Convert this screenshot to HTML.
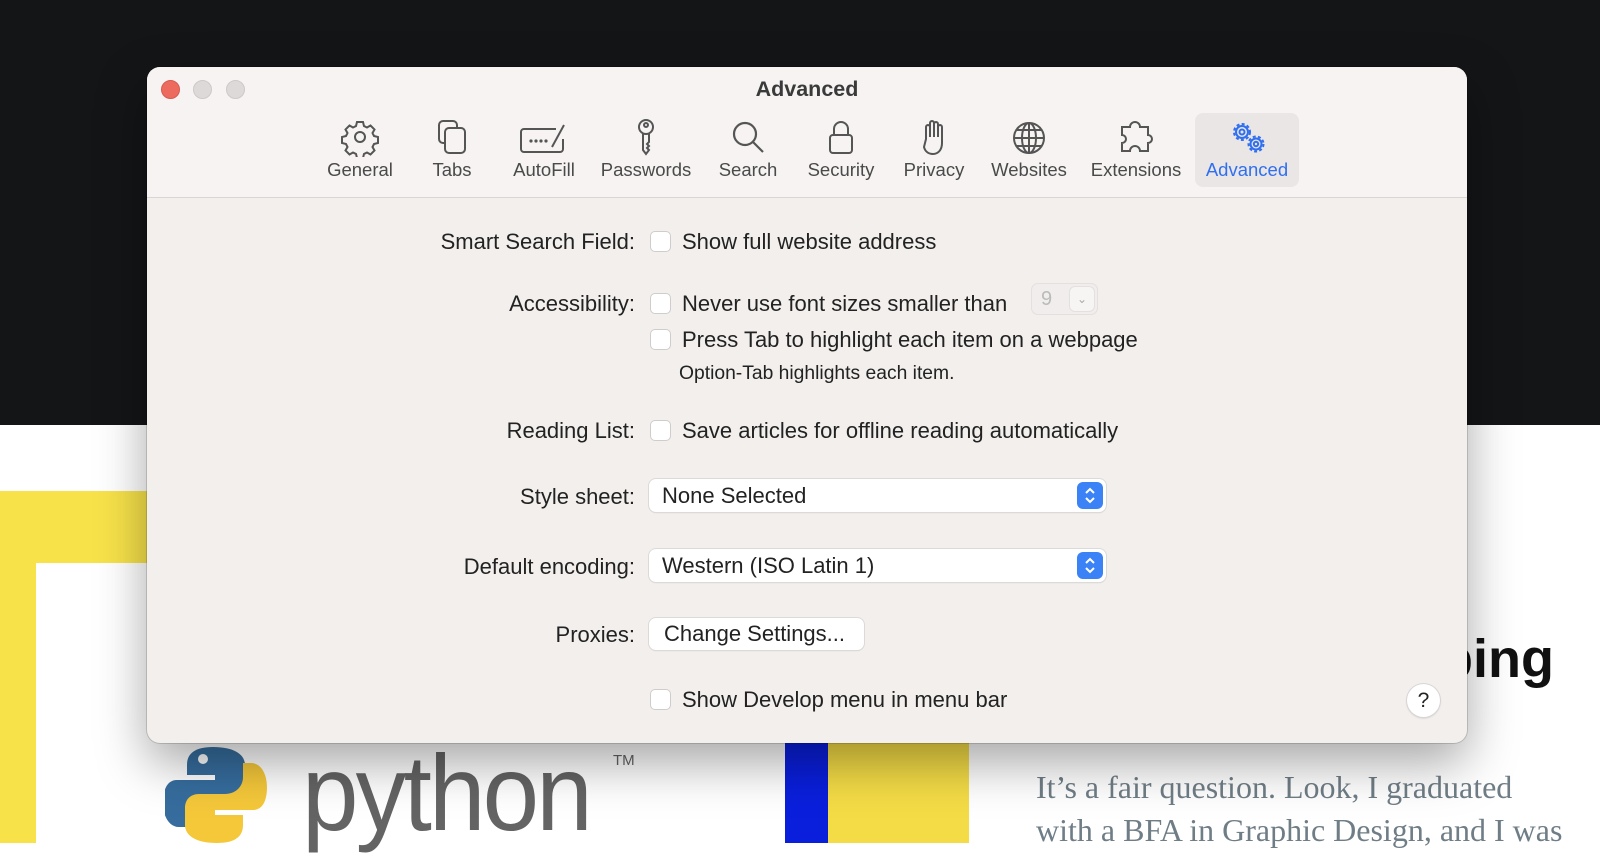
<!DOCTYPE html>
<html><head><meta charset="utf-8"><style>
*{margin:0;padding:0;box-sizing:border-box}
body{width:1600px;height:843px;overflow:hidden;position:relative;background:#fff;font-family:"Liberation Sans",sans-serif;color:#222}
.abs{position:absolute}
.dark{left:0;top:0;width:1600px;height:425px;background:#141517}
.win{left:147px;top:67px;width:1320px;height:676px;background:#f2efed;border-radius:13px;box-shadow:0 20px 50px rgba(0,0,0,.35),0 0 0 1px rgba(0,0,0,.15);overflow:hidden}
.tb{left:0;top:0;width:1320px;height:131px;background:#f6f3f2;border-bottom:1px solid #d8d5d4}
.dot{width:19px;height:19px;border-radius:50%;top:13px}
.title{top:10px;left:0;width:1320px;text-align:center;font-weight:bold;font-size:21.5px;color:#3a3a3a}
.item{top:50px;width:110px;text-align:center;font-size:18.5px;color:#4a4a4a}
.item svg{display:block;margin:0 auto 2px;height:40px}
.lbl{right:832px;font-size:22px;text-align:right;white-space:nowrap}
.cb{width:21px;height:21px;border:1px solid #cfcccb;border-radius:5px;background:#fff;left:503px}
.txt{left:535px;font-size:22px;white-space:nowrap}
.pop{left:502px;width:457px;height:33px;background:#fff;border-radius:7px;box-shadow:0 0 0 1px #dcd9d8,0 1px 1px rgba(0,0,0,.15);font-size:22px;padding:4px 0 0 13px}
.step{position:absolute;right:3px;top:3px;width:26px;height:27px;border-radius:6px;background:#3b82f6}
</style></head><body>
<div class="abs dark"></div>
<div class="abs" style="left:0;top:491px;width:150px;height:352px;background:#f7e24a"></div>
<div class="abs" style="left:36px;top:563px;width:120px;height:280px;background:#fff"></div>
<div class="abs" style="left:785px;top:740px;width:43px;height:103px;background:#0a1fdc"></div>
<div class="abs" style="left:828px;top:740px;width:141px;height:103px;background:#f4dc46"></div>
<svg class="abs" style="left:165px;top:745px" width="110" height="100"><path d="M48 2c-20 0-26 8-26 18v10h28v5H12C2 35-2 45-2 58s6 24 16 24h8V68c0-10 8-17 18-17h26c9 0 14-6 14-14V20C80 10 70 2 48 2z" fill="#366d9e"/><path d="M52 98c20 0 26-8 26-18V70H50v-5h38c10 0 14-10 14-23s-6-24-16-24h-8v14c0 10-8 17-18 17H34c-9 0-14 6-14 14v17c0 10 10 18 32 18z" fill="#f5c83a"/><circle cx="38" cy="14" r="5" fill="#fff"/></svg>
<div class="abs" style="left:302px;top:730px;font-size:108px;color:#646464;font-family:'Liberation Sans',sans-serif;letter-spacing:-3px;transform:scaleX(0.94);transform-origin:left">python</div>
<div class="abs" style="left:613px;top:752px;font-size:15px;color:#646464">TM</div>
<div class="abs" style="left:1440px;top:628px;font-size:54px;font-weight:bold;color:#111">ping</div>
<div class="abs" style="left:1036px;top:766px;font-size:32px;line-height:43px;color:#6f7d86;font-family:'Liberation Serif',serif;white-space:nowrap">It’s a fair question. Look, I graduated<br>with a BFA in Graphic Design, and I was</div>

<div class="abs win">
 <div class="abs tb">
  <div class="abs dot" style="left:14px;background:#ed6a5e;border:1px solid #d65a4f"></div>
  <div class="abs dot" style="left:46px;background:#dcd9d8;border:1px solid #ccc9c8"></div>
  <div class="abs dot" style="left:79px;background:#dcd9d8;border:1px solid #ccc9c8"></div>
  <div class="abs title">Advanced</div>
  <div class="abs" style="left:1048px;top:46px;width:104px;height:74px;background:#e9e6e5;border-radius:8px"></div>
  <div class="abs item" style="left:158px"><svg viewBox="0 0 40 40" width="40"><g fill="none" stroke="#555" stroke-width="2"><path d="M17 5h6l1 4 3 1.5 3.5-2 4 4-2 3.5 1.5 3 4 1v6l-4 1-1.5 3 2 3.5-4 4-3.5-2-3 1.5-1 4h-6l-1-4-3-1.5-3.5 2-4-4 2-3.5-1.5-3-4-1v-6l4-1 1.5-3-2-3.5 4-4 3.5 2 3-1.5z"/><circle cx="20" cy="20" r="5"/></g></svg>General</div>
  <div class="abs item" style="left:250px"><svg viewBox="0 0 40 40" width="40"><g fill="none" stroke="#555" stroke-width="2"><rect x="7" y="4" width="18" height="22" rx="4"/><rect x="13" y="11" width="20" height="25" rx="4" fill="#f6f3f2"/></g></svg>Tabs</div>
  <div class="abs item" style="left:342px"><svg viewBox="0 0 52 40" width="52"><g fill="none" stroke="#555" stroke-width="2"><path d="M38 12H6a3 3 0 0 0-3 3v17a3 3 0 0 0 3 3h36a3 3 0 0 0 3-3V22"/><path d="M34 30l12-22"/></g><g fill="#555"><circle cx="13" cy="24" r="1.6"/><circle cx="18" cy="24" r="1.6"/><circle cx="23" cy="24" r="1.6"/><circle cx="28" cy="24" r="1.6"/></g></svg>AutoFill</div>
  <div class="abs item" style="left:444px"><svg viewBox="0 0 40 40" width="40"><g fill="none" stroke="#555" stroke-width="2"><circle cx="20" cy="10" r="7"/><circle cx="20" cy="8" r="2"/><path d="M17 17v16l3 4 3-4-2-2 2-2-2-2 2-2v-8"/></g></svg>Passwords</div>
  <div class="abs item" style="left:546px"><svg viewBox="0 0 40 40" width="40"><g fill="none" stroke="#555" stroke-width="2.2"><circle cx="17" cy="17" r="11"/><path d="M25 25l10 10"/></g></svg>Search</div>
  <div class="abs item" style="left:639px"><svg viewBox="0 0 40 40" width="40"><g fill="none" stroke="#555" stroke-width="2"><path d="M13 18v-6a7 7 0 0 1 14 0v6"/><rect x="9" y="18" width="22" height="18" rx="3"/></g></svg>Security</div>
  <div class="abs item" style="left:732px"><svg viewBox="0 0 40 40" width="40"><path d="M12 22V10a2 2 0 0 1 4 0v10V6a2 2 0 0 1 4 0v14V7a2 2 0 0 1 4 0v13V10a2 2 0 0 1 4 0v16c0 7-4 11-9 11s-8-3-9-7z" fill="none" stroke="#555" stroke-width="2"/></svg>Privacy</div>
  <div class="abs item" style="left:827px"><svg viewBox="0 0 40 40" width="40"><g fill="none" stroke="#555" stroke-width="2"><circle cx="20" cy="21" r="15"/><ellipse cx="20" cy="21" rx="7" ry="15"/><path d="M5 21h30M7 13h26M7 29h26M20 6v30"/></g></svg>Websites</div>
  <div class="abs item" style="left:934px"><svg viewBox="0 0 48 40" width="48"><path d="M10 10h8a5 5 0 1 1 10 0h8v8a4 4 0 1 1 0 8v8h-8a5 5 0 1 0-10 0h-8v-8a4 4 0 1 0 0-8z" fill="none" stroke="#555" stroke-width="2"/></svg>Extensions</div>
  <div class="abs item" style="left:1045px;color:#2f6ff0"><svg viewBox="0 0 48 40" width="48"><g fill="none" stroke="#2f6ff0" stroke-width="2"><circle cx="19" cy="15" r="8" stroke-dasharray="3 2.3"/><circle cx="19" cy="15" r="6"/><circle cx="19" cy="15" r="2.5"/><circle cx="33" cy="27" r="7.5" stroke-dasharray="3 2.3"/><circle cx="33" cy="27" r="5.5"/><circle cx="33" cy="27" r="2.2"/></g></svg>Advanced</div>
 </div>
 <div class="abs lbl" style="top:162px">Smart Search Field:</div>
 <div class="abs cb" style="top:164px"></div><div class="abs txt" style="top:162px">Show full website address</div>
 <div class="abs lbl" style="top:224px">Accessibility:</div>
 <div class="abs cb" style="top:226px"></div><div class="abs txt" style="top:224px">Never use font sizes smaller than</div>
 <div class="abs" style="left:885px;top:217px;width:65px;height:30px;border-radius:6px;background:#f0edec;box-shadow:0 0 0 1px #e3e0df;font-size:20px;color:#bbb;padding:4px 0 0 9px">9<div style="position:absolute;right:3px;top:3px;width:24px;height:24px;border-radius:5px;background:#f7f5f4;box-shadow:0 0 0 1px #e3e0df;color:#aaa;font-size:12px;text-align:center;line-height:24px">⌄</div></div>
 <div class="abs cb" style="top:262px"></div><div class="abs txt" style="top:260px">Press Tab to highlight each item on a webpage</div>
 <div class="abs" style="left:532px;top:296px;font-size:19.3px">Option-Tab highlights each item.</div>
 <div class="abs lbl" style="top:351px">Reading List:</div>
 <div class="abs cb" style="top:353px"></div><div class="abs txt" style="top:351px">Save articles for offline reading automatically</div>
 <div class="abs lbl" style="top:417px">Style sheet:</div>
 <div class="abs pop" style="top:412px">None Selected<div class="step"><svg width="26" height="27"><path d="M9 11l4-4 4 4M9 16l4 4 4-4" fill="none" stroke="#fff" stroke-width="2"/></svg></div></div>
 <div class="abs lbl" style="top:487px">Default encoding:</div>
 <div class="abs pop" style="top:482px">Western (ISO Latin 1)<div class="step"><svg width="26" height="27"><path d="M9 11l4-4 4 4M9 16l4 4 4-4" fill="none" stroke="#fff" stroke-width="2"/></svg></div></div>
 <div class="abs lbl" style="top:555px">Proxies:</div>
 <div class="abs" style="left:502px;top:551px;width:215px;height:32px;background:#fff;border-radius:7px;box-shadow:0 0 0 1px #dcd9d8,0 1px 1px rgba(0,0,0,.15);font-size:22px;padding:3px 0 0 15px">Change Settings...</div>
 <div class="abs cb" style="top:622px"></div><div class="abs txt" style="top:620px">Show Develop menu in menu bar</div>
 <div class="abs" style="left:1260px;top:617px;width:33px;height:33px;border-radius:50%;background:#fff;box-shadow:0 0 0 1px #d8d5d4,0 1px 2px rgba(0,0,0,.2);font-size:21px;text-align:center;line-height:33px">?</div>
</div>
</body></html>
